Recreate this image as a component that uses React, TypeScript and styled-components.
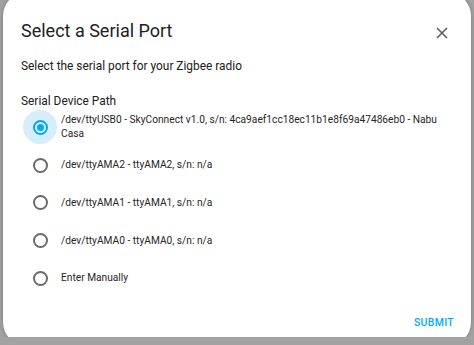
import { useState } from "react";
import styled, { createGlobalStyle } from "styled-components";

const ports = [
  {
    id: "usb0",
    label:
      "/dev/ttyUSB0 - SkyConnect v1.0, s/n: 4ca9aef1cc18ec11b1e8f69a47486eb0 - Nabu Casa",
  },
  { id: "ama2", label: "/dev/ttyAMA2 - ttyAMA2, s/n: n/a" },
  { id: "ama1", label: "/dev/ttyAMA1 - ttyAMA1, s/n: n/a" },
  { id: "ama0", label: "/dev/ttyAMA0 - ttyAMA0, s/n: n/a" },
  { id: "manual", label: "Enter Manually" },
];

export default function App() {
  const [selected, setSelected] = useState("usb0");

  return (
    <>
      <GlobalStyle />
      <Backdrop>
        <Dialog>
          <Header>
            <Title>Select a Serial Port</Title>
            <CloseButton aria-label="Close">
              <svg width="12" height="12" viewBox="0 0 12 12">
                <path
                  d="M1 1 L11 11 M11 1 L1 11"
                  stroke="#5f5f5f"
                  strokeWidth="1.6"
                  fill="none"
                />
              </svg>
            </CloseButton>
          </Header>
          <Description>Select the serial port for your Zigbee radio</Description>
          <FieldLabel>Serial Device Path</FieldLabel>
          <RadioList>
            {ports.map((p) => (
              <Row key={p.id} onClick={() => setSelected(p.id)}>
                <RadioBox $checked={selected === p.id}>
                  <Ring $checked={selected === p.id} />
                </RadioBox>
                <Label>{p.label}</Label>
              </Row>
            ))}
          </RadioList>
          <Footer>
            <SubmitButton>Submit</SubmitButton>
          </Footer>
        </Dialog>
      </Backdrop>
    </>
  );
}

const GlobalStyle = createGlobalStyle`
  html, body {
    margin: 0;
    padding: 0;
    background: #a2a2a2;
    overflow: hidden;
  }
  body {
    font-family: Roboto, "Liberation Sans", sans-serif;
  }
`;

const Backdrop = styled.div`
  width: 474px;
  height: 345px;
  padding-left: 3px;
  box-sizing: border-box;
`;

const Dialog = styled.div`
  width: 468px;
  height: 354px;
  margin-top: -8px;
  background: #ffffff;
  border-radius: 24px;
  box-shadow: 0 0 4px rgba(0, 0, 0, 0.25);
  display: flex;
  flex-direction: column;
  box-sizing: border-box;
`;

const Header = styled.div`
  display: flex;
  align-items: center;
  justify-content: space-between;
  padding: 27px 24px 0 18px;
`;

const Title = styled.h2`
  margin: 0;
  font-size: 18px;
  line-height: 24px;
  font-weight: 400;
  color: #212121;
`;

const CloseButton = styled.button`
  border: none;
  background: none;
  padding: 0;
  width: 12px;
  height: 12px;
  display: flex;
  margin-top: 3px;
  margin-right: -1px;
`;

const Description = styled.p`
  margin: 15px 0 0 18px;
  font-size: 11.9px;
  line-height: 16px;
  color: #212121;
`;

const FieldLabel = styled.div`
  margin: 18.5px 0 0 18px;
  font-size: 11.9px;
  line-height: 16px;
  color: #212121;
`;

const RadioList = styled.div`
  display: flex;
  flex-direction: column;
  padding-left: 18px;
`;

const Row = styled.div`
  display: flex;
  align-items: center;
  height: 37.75px;
  cursor: pointer;
`;

const RadioBox = styled.div<{ $checked: boolean }>`
  width: 38px;
  height: 38px;
  flex: none;
  display: flex;
  align-items: center;
  justify-content: center;
  position: relative;
  &::before {
    content: "";
    position: absolute;
    width: 34px;
    height: 34px;
    border-radius: 50%;
    background: ${(p) => (p.$checked ? "#d6edfb" : "transparent")};
  }
`;

const Ring = styled.span<{ $checked: boolean }>`
  position: relative;
  width: 15px;
  height: 15px;
  box-sizing: border-box;
  border-radius: 50%;
  border: 2px solid ${(p) => (p.$checked ? "#03a9f4" : "#6b6b6b")};
  display: flex;
  align-items: center;
  justify-content: center;
  &::after {
    content: "";
    width: 7px;
    height: 7px;
    border-radius: 50%;
    background: ${(p) => (p.$checked ? "#03a9f4" : "transparent")};
  }
`;

const Label = styled.span`
  padding-left: 2px;
  padding-right: 34px;
  font-size: 10.2px;
  line-height: 14px;
  color: #262626;
`;

const Footer = styled.div`
  display: flex;
  justify-content: flex-end;
  padding: 19px 17px 0 0;
`;

const SubmitButton = styled.button`
  border: none;
  background: none;
  padding: 0;
  font-family: Roboto, "Liberation Sans", sans-serif;
  font-size: 10.5px;
  font-weight: 500;
  letter-spacing: 0.3px;
  text-transform: uppercase;
  color: #03a9f4;
`;
